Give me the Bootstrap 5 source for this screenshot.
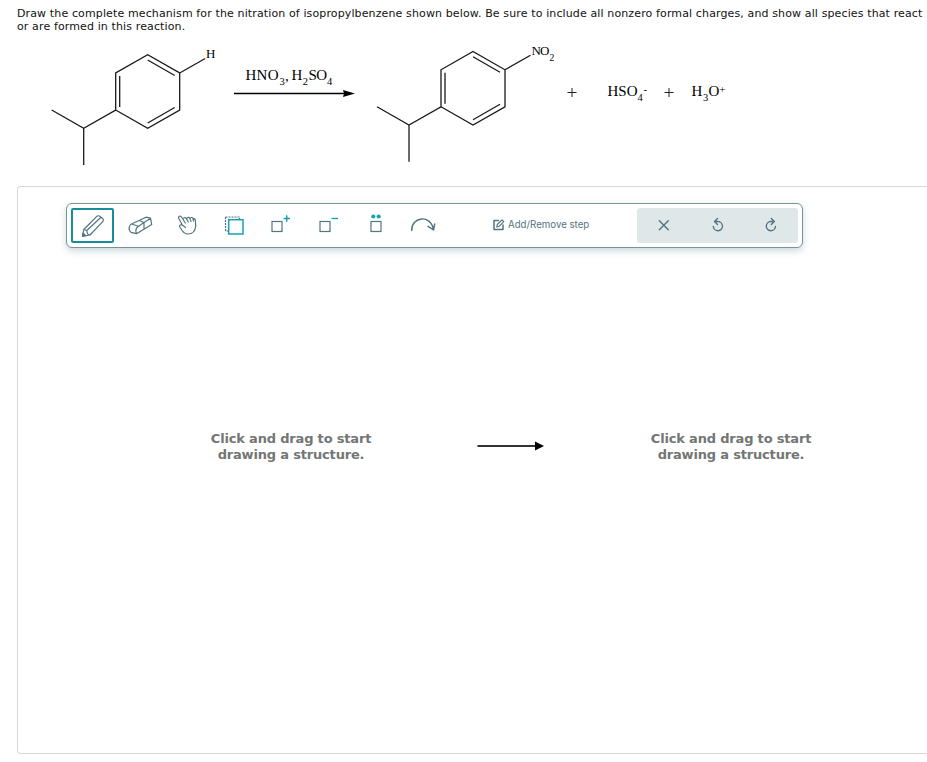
<!DOCTYPE html>
<html lang="en">
<head>
<meta charset="utf-8">
<meta name="viewport" content="width=device-width, initial-scale=1">
<title>Reaction mechanism</title>
<link href="https://cdn.jsdelivr.net/npm/bootstrap@5.3.0/dist/css/bootstrap.min.css" rel="stylesheet">
<style>
body{background:#fff;color:#000;font-family:"DejaVu Sans",Verdana,sans-serif;overflow:hidden;height:762px}
.prompt{font-size:11px;line-height:13px;padding:7px 0 0 17px;height:40px;white-space:nowrap;letter-spacing:.125px;color:#111}
.scheme{height:146px}
.scheme svg,.tool svg,.step-arrow svg{display:block}
.chem{font-family:"Liberation Serif","Times New Roman",serif;fill:#000}
.board{margin-left:17px;height:568px;border:1px solid #d3d9db;border-right:0;border-radius:4px 0 0 4px}
.tools{width:737px;height:45px;margin:16px 0 0 48px;border:1px solid #76939b;border-radius:6px;padding:4px;box-shadow:0 3px 7px rgba(70,110,125,.27)}
.tool{height:35px;border:0;background:none;padding:0;border-radius:2px;color:#527580}
.tool svg{fill:none;stroke:currentColor;stroke-width:1.2;stroke-linejoin:round;stroke-linecap:round}
.tool .sharp{stroke-linejoin:miter;stroke-linecap:butt}
.tool.active{border:2px solid #178c9c}
.step-label{font:9.7px/12px Inter,sans-serif;padding-bottom:2px}
.history{width:161px;background:#dfe7e8;border-radius:3px}
.canvas-row{margin-top:183px;padding-left:183px}
.hint{width:180px;font-size:13px;line-height:16px;letter-spacing:-.18px;color:#747675}
</style>
</head>
<body>
<p class="prompt mb-0">Draw the complete mechanism for the nitration of isopropylbenzene shown below. Be sure to include all nonzero formal charges, and show all species that react<br>or are formed in this reaction.</p>
<div class="scheme">
<svg width="927" height="146" viewBox="0 40 927 146" role="img" aria-label="Nitration reaction scheme">
<defs>
<g id="skeleton" fill="none" stroke="#1a1a1a" stroke-width="1.3">
<path d="M52 110 84 128.300 116 110V73L148 54.700 180 73V110L148 128.300 116 110M84 128.300V165M180 73 205.500 58.500"/>
<path d="M120 107V76M148 60 175 75.500M148 123 175 107.500"/>
</g>
</defs>
<use href="#skeleton" x="-.3"/>
<use href="#skeleton" x="325" y="-3.200"/>
<g class="chem">
<text x="206" y="58" font-size="13">H</text>
<text x="531.500" y="55" font-size="13" textLength="18">NO</text><text x="549.500" y="61" font-size="9.500">2</text>
<g font-size="15">
<text x="245.500" y="80" textLength="33">HNO</text><text x="279.500" y="85" font-size="10.500">3</text><text x="285" y="81">,</text>
<text x="291.500" y="80">H</text><text x="302.700" y="85" font-size="10.500">2</text><text x="308.500" y="80" textLength="18.500">SO</text><text x="327" y="85" font-size="10.500">4</text>
<text x="607.500" y="96" textLength="30">HSO</text><text x="637.500" y="101" font-size="10.500">4</text><text x="643.500" y="93" font-size="10.500">-</text>
<text x="691.500" y="96">H</text><text x="703" y="101" font-size="10.500">3</text><text x="708.500" y="96">O</text><text x="719.300" y="92.500" font-size="11">+</text>
</g>
</g>
<path d="M567.500 92.500h9M572 88v9M664.500 92.500h9M669 88v9" stroke="#222" stroke-width="1"/>
<path d="M234 93.500H345" stroke="#000" stroke-width="1.400"/><path d="M343 90 355 93.500 343 97 344 93.500Z"/>
</svg>
</div>
<main class="board">
<div class="tools d-flex bg-white" role="toolbar" aria-label="Drawing tools">
<button class="tool active" aria-label="Pencil"><svg width="39" height="31" viewBox="73 210 39 31"><path d="M82.500 236.200 83.800 229.500 96.800 216.300q1.200-1 2.600-.2l3.300 2.300q1.200 1.200.3 3L90 235ZM83.800 229.500l3 1 .7 3.500 2.500 1M86.800 230.500 101 217.300"/><path d="m82.500 236.200.5-3 2.800 2.500Z" fill="currentColor"/></svg></button>
<button class="tool" aria-label="Eraser"><svg width="48" height="35" viewBox="114 208 48 35"><path d="M131.500 224 146 217.200 150.500 218.200 151.700 224.500 136.500 233.700 131 232.300Q128.300 230 129.300 227 130 224.500 131.500 224L138.500 226.300 150.500 218.200M138.500 226.300Q134.500 229 136.500 233.700M139 220.500 144 222.500V229"/></svg></button>
<button class="tool" aria-label="Pan"><svg width="45" height="35" viewBox="162 208 45 35"><path d="M182.300 225 178.700 218.200Q178.300 216 180 216L181.300 216.700 185.300 223M183.600 218.200Q185 216.700 186.300 218.400L188.300 222M187 218.200Q188.700 216.500 189.800 218.400L191 221.500M190.300 218Q192.300 216.700 193 218.700L193.500 221M193 218.300Q195.200 218.200 195.400 221L195.700 226Q195 234 188 234 184.500 234 182 230.500L179.500 226.500Q179.500 224.300 182.300 225L185.500 227.500"/></svg></button>
<button class="tool" aria-label="Select"><svg class="sharp" width="52" height="35" viewBox="207 208 52 35"><path d="M225.500 217h14v3M225.500 217v14h4" stroke-dasharray="2 1"/><rect x="228.700" y="219.700" width="14.300" height="14.300" stroke="#1aa0b4" stroke-width="1.500" fill="#fff"/></svg></button>
<button class="tool" aria-label="Positive charge"><svg class="sharp" width="46" height="35" viewBox="259 208 46 35"><rect x="272" y="221.500" width="10" height="10"/><path d="M283.500 218.500h6.500M286.700 215.300v6.500" stroke="#1aa0b4" stroke-width="1.500"/></svg></button>
<button class="tool" aria-label="Negative charge"><svg class="sharp" width="48" height="35" viewBox="305 208 48 35"><rect x="320" y="221.500" width="10" height="10"/><path d="M331.500 218.500h6.500" stroke="#1aa0b4" stroke-width="1.400"/></svg></button>
<button class="tool" aria-label="Lone pair"><svg class="sharp" width="46" height="35" viewBox="353 208 46 35"><rect x="371" y="221.500" width="10" height="10"/><g fill="#1aa0b4" stroke="none"><circle cx="373.300" cy="216.500" r="2.100"/><circle cx="378.700" cy="216.500" r="2.100"/></g></svg></button>
<button class="tool" aria-label="Electron arrow"><svg width="93" height="35" viewBox="399 208 93 35"><path d="M411.700 230.500C411.500 216.500 430.500 214 433.500 229.500M428 226.300l5.500 3.700 1.200-6" stroke-width="1.400"/></svg></button>
<button class="tool d-flex align-items-center text-nowrap"><svg width="16" height="35" viewBox="492 208 16 35"><path d="M498.500 220.500h-4.500v9h9v-4.500" stroke-width="1.500"/><path d="m496.800 227 .5-2.500 4.700-4.700 1.800 1.800-4.700 4.700Z"/></svg><span class="step-label">Add/Remove step</span></button>
<div class="history d-flex ms-auto">
<button class="tool" aria-label="Clear"><svg width="54" height="35" viewBox="637 208 54 35"><path d="m659.300 220.700 9 9M668.300 220.700l-9 9" stroke-width="1.400"/></svg></button>
<button class="tool" aria-label="Undo"><svg width="53" height="35" viewBox="691 208 53 35"><path d="M713.300 226.500a4.600 4.600 0 1 0 4.700-5h-3.500M717.500 218.500l-3 3 3 3" stroke-width="1.400"/></svg></button>
<button class="tool" aria-label="Redo"><svg width="54" height="35" viewBox="744 208 54 35"><path d="M775.500 226.500a4.600 4.600 0 1 1-4.700-5h3.500M771.300 218.500l3 3-3 3" stroke-width="1.400"/></svg></button>
</div>
</div>
<div class="canvas-row d-flex align-items-start">
<div class="hint text-center fw-bold">Click and drag to start<br>drawing a structure.</div>
<div class="step-arrow"><svg width="260" height="32" viewBox="381 431 260 32"><path d="M477.500 446H537" stroke="#333" stroke-width="1.800"/><path d="M535 441.500 544 446l-9 4.500Z"/></svg></div>
<div class="hint text-center fw-bold">Click and drag to start<br>drawing a structure.</div>
</div>
</main>
<script src="https://cdn.jsdelivr.net/npm/bootstrap@5.3.0/dist/js/bootstrap.bundle.min.js"></script>
</body>
</html>
